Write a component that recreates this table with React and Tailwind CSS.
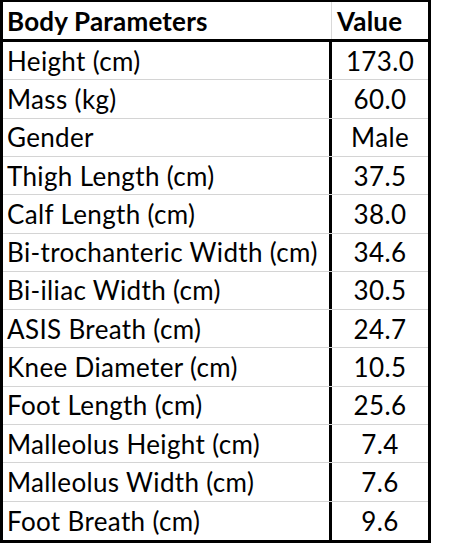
export default function App() {
  const rows = [
    ["Height (cm)", "173.0"],
    ["Mass (kg)", "60.0"],
    ["Gender", "Male"],
    ["Thigh Length (cm)", "37.5"],
    ["Calf Length (cm)", "38.0"],
    ["Bi-trochanteric Width (cm)", "34.6"],
    ["Bi-iliac Width (cm)", "30.5"],
    ["ASIS Breath (cm)", "24.7"],
    ["Knee Diameter (cm)", "10.5"],
    ["Foot Length (cm)", "25.6"],
    ["Malleolus Height (cm)", "7.4"],
    ["Malleolus Width (cm)", "7.6"],
    ["Foot Breath (cm)", "9.6"],
  ];
  return (
    <div className="w-[474px] h-[560px] bg-white" style={{ fontFamily: "Lato, 'Open Sans', sans-serif" }}>
      <div className="w-[431px] h-[543px] border-[3px] border-t-2 border-black flex flex-col text-black">
        <div className="h-[40px] flex border-b-[3px] border-black text-[26px] tracking-[0.2px] font-bold leading-none">
          <div className="w-[329px] pl-[4px] flex items-center border-r border-[#d9d9d9]">Body Parameters</div>
          <div className="flex-1 pl-[5px] flex items-center">Value</div>
        </div>
        <div className="flex-1 grid grid-rows-[repeat(13,1fr)] text-[26px] tracking-[0.35px] leading-none">
          {rows.map(([k, v], i) => (
            <div key={k} className={"flex " + (i < rows.length - 1 ? "border-b border-[#d4d4d4]" : "")}>
              <div className="w-[329px] pl-[4px] flex items-center border-r-[3px] border-black">{k}</div>
              <div className="flex-1 flex items-center justify-center">{v}</div>
            </div>
          ))}
        </div>
      </div>
    </div>
  );
}
